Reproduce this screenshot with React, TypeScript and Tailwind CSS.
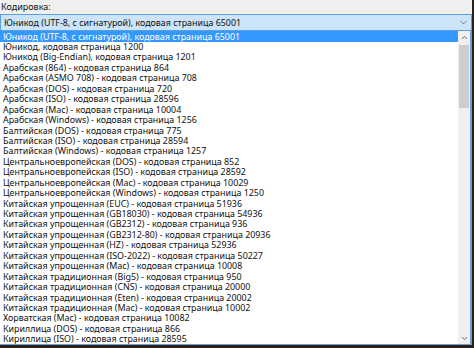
import { ChevronDown, ChevronUp } from "lucide-react";

const ROWS = [
  "Юникод (UTF-8, с сигнатурой), кодовая страница 65001",
  "Юникод, кодовая страница 1200",
  "Юникод (Big-Endian), кодовая страница 1201",
  "Арабская (864) - кодовая страница 864",
  "Арабская (ASMO 708) - кодовая страница 708",
  "Арабская (DOS) - кодовая страница 720",
  "Арабская (ISO) - кодовая страница 28596",
  "Арабская (Mac) - кодовая страница 10004",
  "Арабская (Windows) - кодовая страница 1256",
  "Балтийская (DOS) - кодовая страница 775",
  "Балтийская (ISO) - кодовая страница 28594",
  "Балтийская (Windows) - кодовая страница 1257",
  "Центральноевропейская (DOS) - кодовая страница 852",
  "Центральноевропейская (ISO) - кодовая страница 28592",
  "Центральноевропейская (Mac) - кодовая страница 10029",
  "Центральноевропейская (Windows) - кодовая страница 1250",
  "Китайская упрощенная (EUC) - кодовая страница 51936",
  "Китайская упрощенная (GB18030) - кодовая страница 54936",
  "Китайская упрощенная (GB2312) - кодовая страница 936",
  "Китайская упрощенная (GB2312-80) - кодовая страница 20936",
  "Китайская упрощенная (HZ) - кодовая страница 52936",
  "Китайская упрощенная (ISO-2022) - кодовая страница 50227",
  "Китайская упрощенная (Mac) - кодовая страница 10008",
  "Китайская традиционная (Big5) - кодовая страница 950",
  "Китайская традиционная (CNS) - кодовая страница 20000",
  "Китайская традиционная (Eten) - кодовая страница 20002",
  "Китайская традиционная (Mac) - кодовая страница 10002",
  "Хорватская (Mac) - кодовая страница 10082",
  "Кириллица (DOS) - кодовая страница 866",
  "Кириллица (ISO) - кодовая страница 28595",
];

export default function App() {
  return (
    <div className="h-[348px] w-[474px] overflow-hidden bg-[#2b2118] font-['Noto_Sans',sans-serif] text-[8.9px] text-[#111]">
      <div className="flex h-[345px] w-[472px] flex-col bg-[#f0f0f0]">
        <div className="h-[14px] pl-[1px] text-[9px] leading-[13px]">Кодировка:</div>

        <div className="flex h-[17px] items-center justify-between border border-[#5a9fe0] bg-[#cce4f7] pl-[3px] pr-[2px]">
          <span>{ROWS[0]}</span>
          <ChevronDown size={11} strokeWidth={1.5} className="text-[#555]" />
        </div>

        <div className="flex min-h-0 flex-1 border-r-2 border-b border-[#6d9cd0] bg-white">
          <div className="min-w-0 flex-1">
            {ROWS.map((row, i) => (
              <div
                key={row}
                className={
                  i === 0
                    ? "h-[11px] whitespace-nowrap bg-[#3399ff] pl-[3px] leading-[11px] text-white"
                    : "h-[10.45px] whitespace-nowrap pl-[3px] leading-[10.45px]"
                }
              >
                {row}
              </div>
            ))}
          </div>

          <div className="flex w-[12px] flex-col bg-[#f0f0f0]">
            <div className="flex h-[12px] items-center justify-center">
              <ChevronUp size={9} strokeWidth={2.5} className="text-[#606060]" />
            </div>
            <div className="mx-auto mt-[2px] h-[63px] w-[10px] bg-[#cdcdcd]" />
            <div className="flex-1" />
            <div className="flex h-[12px] items-center justify-center">
              <ChevronDown size={9} strokeWidth={2.5} className="text-[#606060]" />
            </div>
          </div>
        </div>
      </div>
    </div>
  );
}
